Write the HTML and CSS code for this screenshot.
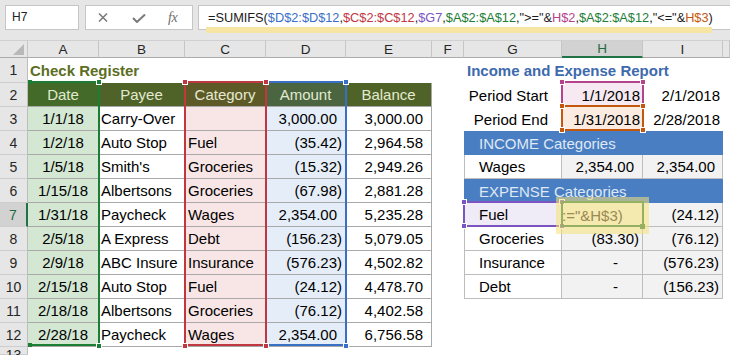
FILE: index.html
```html
<!DOCTYPE html>
<html>
<head>
<meta charset="utf-8">
<link rel="stylesheet" href="styles.css">
</head>
<body>
<div class="app">
  <div class="fbar">
    <div class="namebox">H7</div>
    <div class="btns">
      <svg class="ico-x" width="10" height="9" viewBox="0 0 10 9"><path d="M1 0.5 L9 8.5 M9 0.5 L1 8.5" stroke="#7a7a7a" stroke-width="1.5" fill="none"/></svg>
      <svg class="ico-ok" width="14" height="9" viewBox="0 0 14 9"><path d="M1 4 L5 8 L13 0.5" stroke="#7a7a7a" stroke-width="2" fill="none"/></svg>
      <span class="fx">fx</span>
    </div>
    <div class="formula"><span>=SUMIFS(</span><span class="f-d">$D$2:$D$12</span>,<span class="f-c">$C$2:$C$12</span>,<span class="f-g">$G7</span>,<span class="f-a">$A$2:$A$12</span>,"&gt;="&amp;<span class="f-h2">H$2</span>,<span class="f-a">$A$2:$A$12</span>,"&lt;="&amp;<span class="f-h3">H$3</span>)</div>
    <div class="fline"></div>
  </div>

  <div class="sheet">
    <!-- column headers -->
    <div class="ch corner"><i class="tri"></i></div>
    <div class="ch">A</div><div class="ch">B</div><div class="ch">C</div><div class="ch">D</div><div class="ch">E</div><div class="ch">F</div><div class="ch">G</div><div class="ch sel">H</div><div class="ch">I</div><div class="ch"></div>

    <!-- row 1 -->
    <div class="rh">1</div>
    <div class="cell title">Check Register</div><div class="cell"></div><div class="cell"></div><div class="cell"></div><div class="cell"></div><div class="cell"></div>
    <div class="cell rtitle">Income and Expense Report</div><div class="cell"></div><div class="cell"></div><div class="cell"></div>

    <!-- row 2 -->
    <div class="rh">2</div>
    <div class="cell t hd hdA">Date</div><div class="cell t hd">Payee</div><div class="cell t hd hdC">Category</div><div class="cell t hd hdD">Amount</div><div class="cell t hd">Balance</div>
    <div class="cell"></div>
    <div class="cell pl">Period Start</div><div class="cell pv h2bg">1/1/2018</div><div class="cell pv">2/1/2018</div><div class="cell"></div>

    <!-- row 3 -->
    <div class="rh">3</div>
    <div class="cell t ga">1/1/18</div><div class="cell t tb">Carry-Over</div><div class="cell t pc"></div><div class="cell t bd pos">3,000.00</div><div class="cell t pos">3,000.00</div>
    <div class="cell"></div>
    <div class="cell pl">Period End</div><div class="cell pv h3bg">1/31/2018</div><div class="cell pv">2/28/2018</div><div class="cell"></div>

    <!-- row 4 -->
    <div class="rh">4</div>
    <div class="cell t ga">1/2/18</div><div class="cell t tb">Auto Stop</div><div class="cell t pc">Fuel</div><div class="cell t bd neg">(35.42)</div><div class="cell t pos">2,964.58</div>
    <div class="cell"></div>
    <div class="cell band">INCOME Categories</div><div class="cell"></div>

    <!-- row 5 -->
    <div class="rh">5</div>
    <div class="cell t ga">1/5/18</div><div class="cell t tb">Smith's</div><div class="cell t pc">Groceries</div><div class="cell t bd neg">(15.32)</div><div class="cell t pos">2,949.26</div>
    <div class="cell"></div>
    <div class="cell rb gl">Wages</div><div class="cell rb gr pos">2,354.00</div><div class="cell rb gr pos2">2,354.00</div><div class="cell"></div>

    <!-- row 6 -->
    <div class="rh">6</div>
    <div class="cell t ga">1/15/18</div><div class="cell t tb">Albertsons</div><div class="cell t pc">Groceries</div><div class="cell t bd neg">(67.98)</div><div class="cell t pos">2,881.28</div>
    <div class="cell"></div>
    <div class="cell band">EXPENSE Categories</div><div class="cell"></div>

    <!-- row 7 -->
    <div class="rh sel">7</div>
    <div class="cell t ga">1/31/18</div><div class="cell t tb">Paycheck</div><div class="cell t pc">Wages</div><div class="cell t bd pos">2,354.00</div><div class="cell t pos">5,235.28</div>
    <div class="cell"></div>
    <div class="cell rb gl g7bg">Fuel</div><div class="cell rb gr"></div><div class="cell rb gr neg">(24.12)</div><div class="cell"></div>

    <!-- row 8 -->
    <div class="rh">8</div>
    <div class="cell t ga">2/5/18</div><div class="cell t tb">A Express</div><div class="cell t pc">Debt</div><div class="cell t bd neg">(156.23)</div><div class="cell t pos">5,079.05</div>
    <div class="cell"></div>
    <div class="cell rb gl">Groceries</div><div class="cell rb gr neg">(83.30)</div><div class="cell rb gr neg">(76.12)</div><div class="cell"></div>

    <!-- row 9 -->
    <div class="rh">9</div>
    <div class="cell t ga">2/9/18</div><div class="cell t tb">ABC Insure</div><div class="cell t pc">Insurance</div><div class="cell t bd neg">(576.23)</div><div class="cell t pos">4,502.82</div>
    <div class="cell"></div>
    <div class="cell rb gl">Insurance</div><div class="cell rb gr dash">-</div><div class="cell rb gr neg">(576.23)</div><div class="cell"></div>

    <!-- row 10 -->
    <div class="rh">10</div>
    <div class="cell t ga">2/15/18</div><div class="cell t tb">Auto Stop</div><div class="cell t pc">Fuel</div><div class="cell t bd neg">(24.12)</div><div class="cell t pos">4,478.70</div>
    <div class="cell"></div>
    <div class="cell rb gl">Debt</div><div class="cell rb gr dash">-</div><div class="cell rb gr neg">(156.23)</div><div class="cell"></div>

    <!-- row 11 -->
    <div class="rh">11</div>
    <div class="cell t ga">2/18/18</div><div class="cell t tb">Albertsons</div><div class="cell t pc">Groceries</div><div class="cell t bd neg">(76.12)</div><div class="cell t pos">4,402.58</div>
    <div class="cell"></div><div class="cell"></div><div class="cell"></div><div class="cell"></div><div class="cell"></div>

    <!-- row 12 -->
    <div class="rh">12</div>
    <div class="cell t ga">2/28/18</div><div class="cell t tb">Paycheck</div><div class="cell t pc">Wages</div><div class="cell t bd pos">2,354.00</div><div class="cell t pos">6,756.58</div>
    <div class="cell"></div><div class="cell"></div><div class="cell"></div><div class="cell"></div><div class="cell"></div>

    <!-- row 13 -->
    <div class="rh r13">13</div>

    <!-- range highlights (overlays) -->
    <div class="rng rng-d"></div>
    <div class="rng rng-c"></div>
    <div class="rng rng-a"></div>
    <div class="rng rng-h2"></div>
    <div class="rng rng-h3"></div>
    <div class="rng rng-g7"></div>

    <i class="hdl hd-d1"></i><i class="hdl hd-d2"></i>
    <i class="hdl hd-c1"></i><i class="hdl hd-c2"></i><i class="hdl hd-c3"></i><i class="hdl hd-c4"></i>
    <i class="hdl hd-a1"></i><i class="hdl hd-a2"></i><i class="hdl hd-a3"></i><i class="hdl hd-a4"></i>
    <i class="hdl hd-m1"></i><i class="hdl hd-m2"></i>
    <i class="hdl hd-o1"></i><i class="hdl hd-o2"></i><i class="hdl hd-o3"></i><i class="hdl hd-o4"></i>
    <i class="hdl hd-p1"></i><i class="hdl hd-p2"></i><i class="hdl hd-p3"></i><i class="hdl hd-p4"></i>

    <div class="active"></div>
    <i class="fill"></i>
    <div class="edit">:="&amp;H$3)</div>
  </div>
</div>
</body>
</html>
```

FILE: styles.css
```css
html, body {
  margin: 0;
  padding: 0;
  background: #ffffff;
}

.app {
  width: 730px;
  height: 355px;
  overflow: hidden;
  font-family: "Liberation Sans", Arial, sans-serif;
  color: #000;
}

/* ---------- formula bar ---------- */
.fbar {
  position: relative;
  height: 40px;
  box-sizing: border-box;
  background: #e6e6e6;
  display: flex;
  align-items: flex-start;
  padding: 5px 0 0 5px;
}

.namebox {
  width: 74px;
  height: 25px;
  box-sizing: border-box;
  background: #fff;
  border: 1px solid #c6c6c6;
  font-size: 12px;
  display: flex;
  align-items: center;
  padding: 0 0 1px 6px;
  color: #222;
}

.btns {
  margin-left: 6px;
  width: 108px;
  height: 25px;
  box-sizing: border-box;
  background: #fff;
  border: 1px solid #c6c6c6;
  display: flex;
  align-items: center;
}

.ico-x { margin-left: 12px; }
.ico-ok { margin-left: 24px; margin-top: 1px; }

.fx {
  margin-left: 22px;
  font-family: "Liberation Serif", "Times New Roman", serif;
  font-style: italic;
  font-size: 14px;
  color: #6e6e6e;
  letter-spacing: -0.5px;
}

.formula {
  margin-left: 5px;
  flex: 1;
  height: 25px;
  box-sizing: border-box;
  background: #fff;
  border: 1px solid #c6c6c6;
  border-right: none;
  font-size: 12.75px;
  display: flex;
  align-items: center;
  padding-left: 9px;
  white-space: nowrap;
  color: #1a1a1a;
}

.f-d { color: #3a6fc6; }
.f-c { color: #c1373f; }
.f-g { color: #7c54c2; }
.f-a { color: #1c7d35; }
.f-h2 { color: #b5438b; }
.f-h3 { color: #c4570e; }

.fline {
  position: absolute;
  left: 206px;
  top: 27px;
  width: 506px;
  height: 6px;
  background: #f7e5a3;
}

/* ---------- sheet grid ---------- */
.sheet {
  position: relative;
  height: 315px;
  display: grid;
  grid-template-columns: 28px 71px 86px 81px 80px 86px 32px 98px 81px 80px 7px;
  grid-template-rows: 18px 25px repeat(11, 24px) 8px;
  font-size: 15px;
  background: #fff;
  overflow: hidden;
}

.cell {
  display: flex;
  align-items: center;
  box-sizing: border-box;
  white-space: nowrap;
  min-width: 0;
}

.ch {
  display: flex;
  align-items: center;
  justify-content: center;
  box-sizing: border-box;
  background: #e6e6e6;
  border-top: 1px solid #d0d0d0;
  border-right: 1px solid #c6c6c6;
  border-bottom: 1px solid #ababab;
  font-size: 13.5px;
  color: #262626;
}

.ch.sel {
  background: #d2d2d2;
  border-bottom: 2px solid #217346;
  color: #1e6b40;
}

.corner {
  justify-content: flex-end;
  align-items: flex-end;
  padding: 0 3px 2px 0;
}

.tri {
  display: block;
  width: 0;
  height: 0;
  border-left: 11px solid transparent;
  border-bottom: 11px solid #b8b8b8;
}

.rh {
  display: flex;
  align-items: center;
  justify-content: center;
  box-sizing: border-box;
  background: #e6e6e6;
  border-right: 1px solid #bdbdbd;
  border-bottom: 1px solid #cdcdcd;
  font-size: 14px;
  color: #262626;
}

.rh.sel {
  background: #d2d2d2;
  border-right: 2px solid #217346;
  color: #1e6b40;
}

.r13 { align-items: flex-start; padding-top: 0; }

/* ---------- check register ---------- */
.title {
  font-weight: bold;
  color: #5c6e1f;
  padding-left: 2px;
  overflow: visible;
}

.t {
  border-right: 1px solid #a8a8a8;
  border-bottom: 1px solid #a8a8a8;
}

.hd {
  background: #4f6228;
  color: #e3ead0;
  justify-content: center;
}

.hdA { background: #436a29; }
.hdC { background: #5d5a28; }
.hdD { background: #4a6540; }

.ga {
  background: #d3e7d3;
  justify-content: center;
}

.tb { padding-left: 2px; }

.pc {
  background: #f8e6e6;
  padding-left: 3px;
}

.bd { background: #e5eef8; }

.pos {
  justify-content: flex-end;
  padding-right: 8px;
}

.pos2 {
  justify-content: flex-end;
  padding-right: 7px;
}

.neg {
  justify-content: flex-end;
  padding-right: 3px;
}

/* ---------- report ---------- */
.rtitle {
  font-weight: bold;
  color: #3d6aad;
  padding-left: 3px;
  overflow: visible;
}

.pl {
  justify-content: flex-end;
  padding-right: 14px;
}

.pv {
  justify-content: flex-end;
  padding-right: 3px;
}

.h2bg { background: #f6e9f1; }
.h3bg { background: #fbebe0; }

.band {
  grid-column: span 3;
  background: #4a7ec2;
  color: #dfe8f5;
  padding-left: 15px;
}

.rb {
  border-right: 1px solid #bdbdbd;
  border-bottom: 1px solid #bdbdbd;
}

.gl {
  border-left: 1px solid #bdbdbd;
  padding-left: 14px;
}

.gr { background: #f2f2f2; }
.g7bg { background: #efebf7; }

.dash {
  justify-content: flex-end;
  padding-right: 24px;
}

/* ---------- overlays: formula reference ranges ---------- */
.rng {
  position: absolute;
  box-sizing: border-box;
  border: 2px solid;
}

.rng-d  { left: 265px; top: 41px;  width: 82px;  height: 265px; border-color: #3a6fc6; }
.rng-c  { left: 184px; top: 41px;  width: 83px;  height: 265px; border-color: #c1373f; }
.rng-a  { left: 28px;  top: 41px;  width: 72px;  height: 265px; border-color: #1c7d35; border-left-width: 0; }
.rng-h2 { left: 561px; top: 41px;  width: 83px;  height: 26px;  border-color: #b5438b; }
.rng-h3 { left: 561px; top: 65px;  width: 83px;  height: 26px;  border-color: #c4570e; }
.rng-g7 { left: 463px; top: 161px; width: 100px; height: 26px;  border-color: #7c54c2; }

.hdl {
  position: absolute;
  display: block;
  width: 6px;
  height: 6px;
  box-sizing: border-box;
  border: 1px solid #fff;
}

.hd-d1 { left: 343px; top: 39px;  background: #3a6fc6; }
.hd-d2 { left: 343px; top: 303px; background: #3a6fc6; }
.hd-c1 { left: 182px; top: 39px;  background: #c1373f; }
.hd-c2 { left: 263px; top: 39px;  background: #c1373f; }
.hd-c3 { left: 182px; top: 303px; background: #c1373f; }
.hd-c4 { left: 263px; top: 303px; background: #c1373f; }
.hd-a1 { left: 28px;  top: 40px;  width: 4px; height: 4px; border: none; background: #1c7d35; }
.hd-a2 { left: 96px;  top: 39px;  background: #1c7d35; }
.hd-a3 { left: 28px;  top: 303px; width: 4px; height: 4px; border: none; background: #1c7d35; }
.hd-a4 { left: 96px;  top: 303px; background: #1c7d35; }
.hd-m1 { left: 559px; top: 39px;  background: #b5438b; }
.hd-m2 { left: 640px; top: 39px;  background: #b5438b; }
.hd-o1 { left: 559px; top: 63px;  background: #c4570e; }
.hd-o2 { left: 640px; top: 63px;  background: #c4570e; }
.hd-o3 { left: 559px; top: 87px;  background: #c4570e; }
.hd-o4 { left: 640px; top: 87px;  background: #c4570e; }
.hd-p1 { left: 461px; top: 159px; background: #7c54c2; }
.hd-p2 { left: 461px; top: 183px; background: #7c54c2; }
.hd-p3 { left: 559px; top: 159px; background: #7c54c2; }
.hd-p4 { left: 559px; top: 183px; background: #7c54c2; }

.active {
  position: absolute;
  left: 561px;
  top: 161px;
  width: 83px;
  height: 26px;
  box-sizing: border-box;
  border: 2px solid #217346;
}

.fill {
  position: absolute;
  display: block;
  left: 640px;
  top: 184px;
  width: 5px;
  height: 5px;
  background: #217346;
}

.edit {
  position: absolute;
  left: 556px;
  top: 157px;
  width: 93px;
  height: 37px;
  box-sizing: border-box;
  padding-left: 6px;
  display: flex;
  align-items: center;
  background: rgba(246, 226, 118, 0.55);
  color: #9a8a55;
  font-size: 15px;
  white-space: nowrap;
  overflow: hidden;
}
```
